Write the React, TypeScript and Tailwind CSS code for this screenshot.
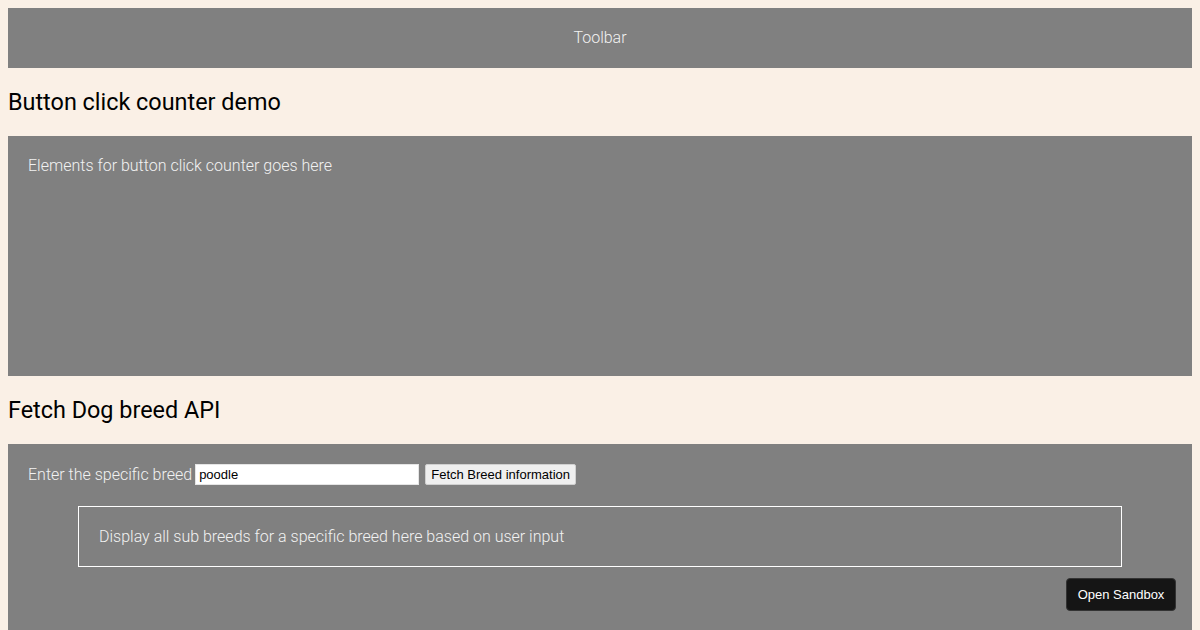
import React, { useState } from 'react';

export default function App() {
  const [breed, setBreed] = useState('poodle');

  return (
    <div className="min-h-[630px] bg-[#faf0e6] p-2 font-['Roboto',sans-serif] font-light text-black relative">
      <div className="h-[60px] bg-[#808080] flex items-center justify-center text-[16px] text-[#f2f2f2]">
        Toolbar
      </div>

      <h2 className="my-5 text-[23.4px] leading-[28px] font-normal">Button click counter demo</h2>
      <div className="h-[240px] bg-[#808080] p-5 text-[16px] leading-[19px] text-[#f2f2f2]">
        Elements for button click counter goes here
      </div>

      <h2 className="my-5 text-[23.4px] leading-[28px] font-normal">Fetch Dog breed API</h2>
      <div className="bg-[#808080] px-5 pt-5 pb-[80px] text-[16px] leading-[19px] text-[#f2f2f2]">
        <div className="flex items-center h-[21px]">
          <span>Enter the specific breed</span>
          <input
            value={breed}
            onChange={(e) => setBreed(e.target.value)}
            className="ml-[3px] w-[224px] h-[21px] bg-white px-[3px] text-[13px] text-black font-normal font-['Liberation_Sans',Arial,sans-serif] outline-none border border-[#e5e5e5]"
          />
          <button className="ml-[6px] h-[21px] w-[151px] bg-[#efefef] border border-[#d0d0d0] rounded-[2px] text-[13px] text-black font-normal font-['Liberation_Sans',Arial,sans-serif]">
            Fetch Breed information
          </button>
        </div>
        <div className="mt-[21px] mx-[50px] border border-white p-5">
          Display all sub breeds for a specific breed here based on user input
        </div>
      </div>

      <button className="absolute right-6 top-[578px] h-[33px] w-[110px] rounded-[4px] bg-[#151515] border border-[#333] text-[13px] text-white font-normal font-['Liberation_Sans',Arial,sans-serif]">
        Open Sandbox
      </button>
    </div>
  );
}
